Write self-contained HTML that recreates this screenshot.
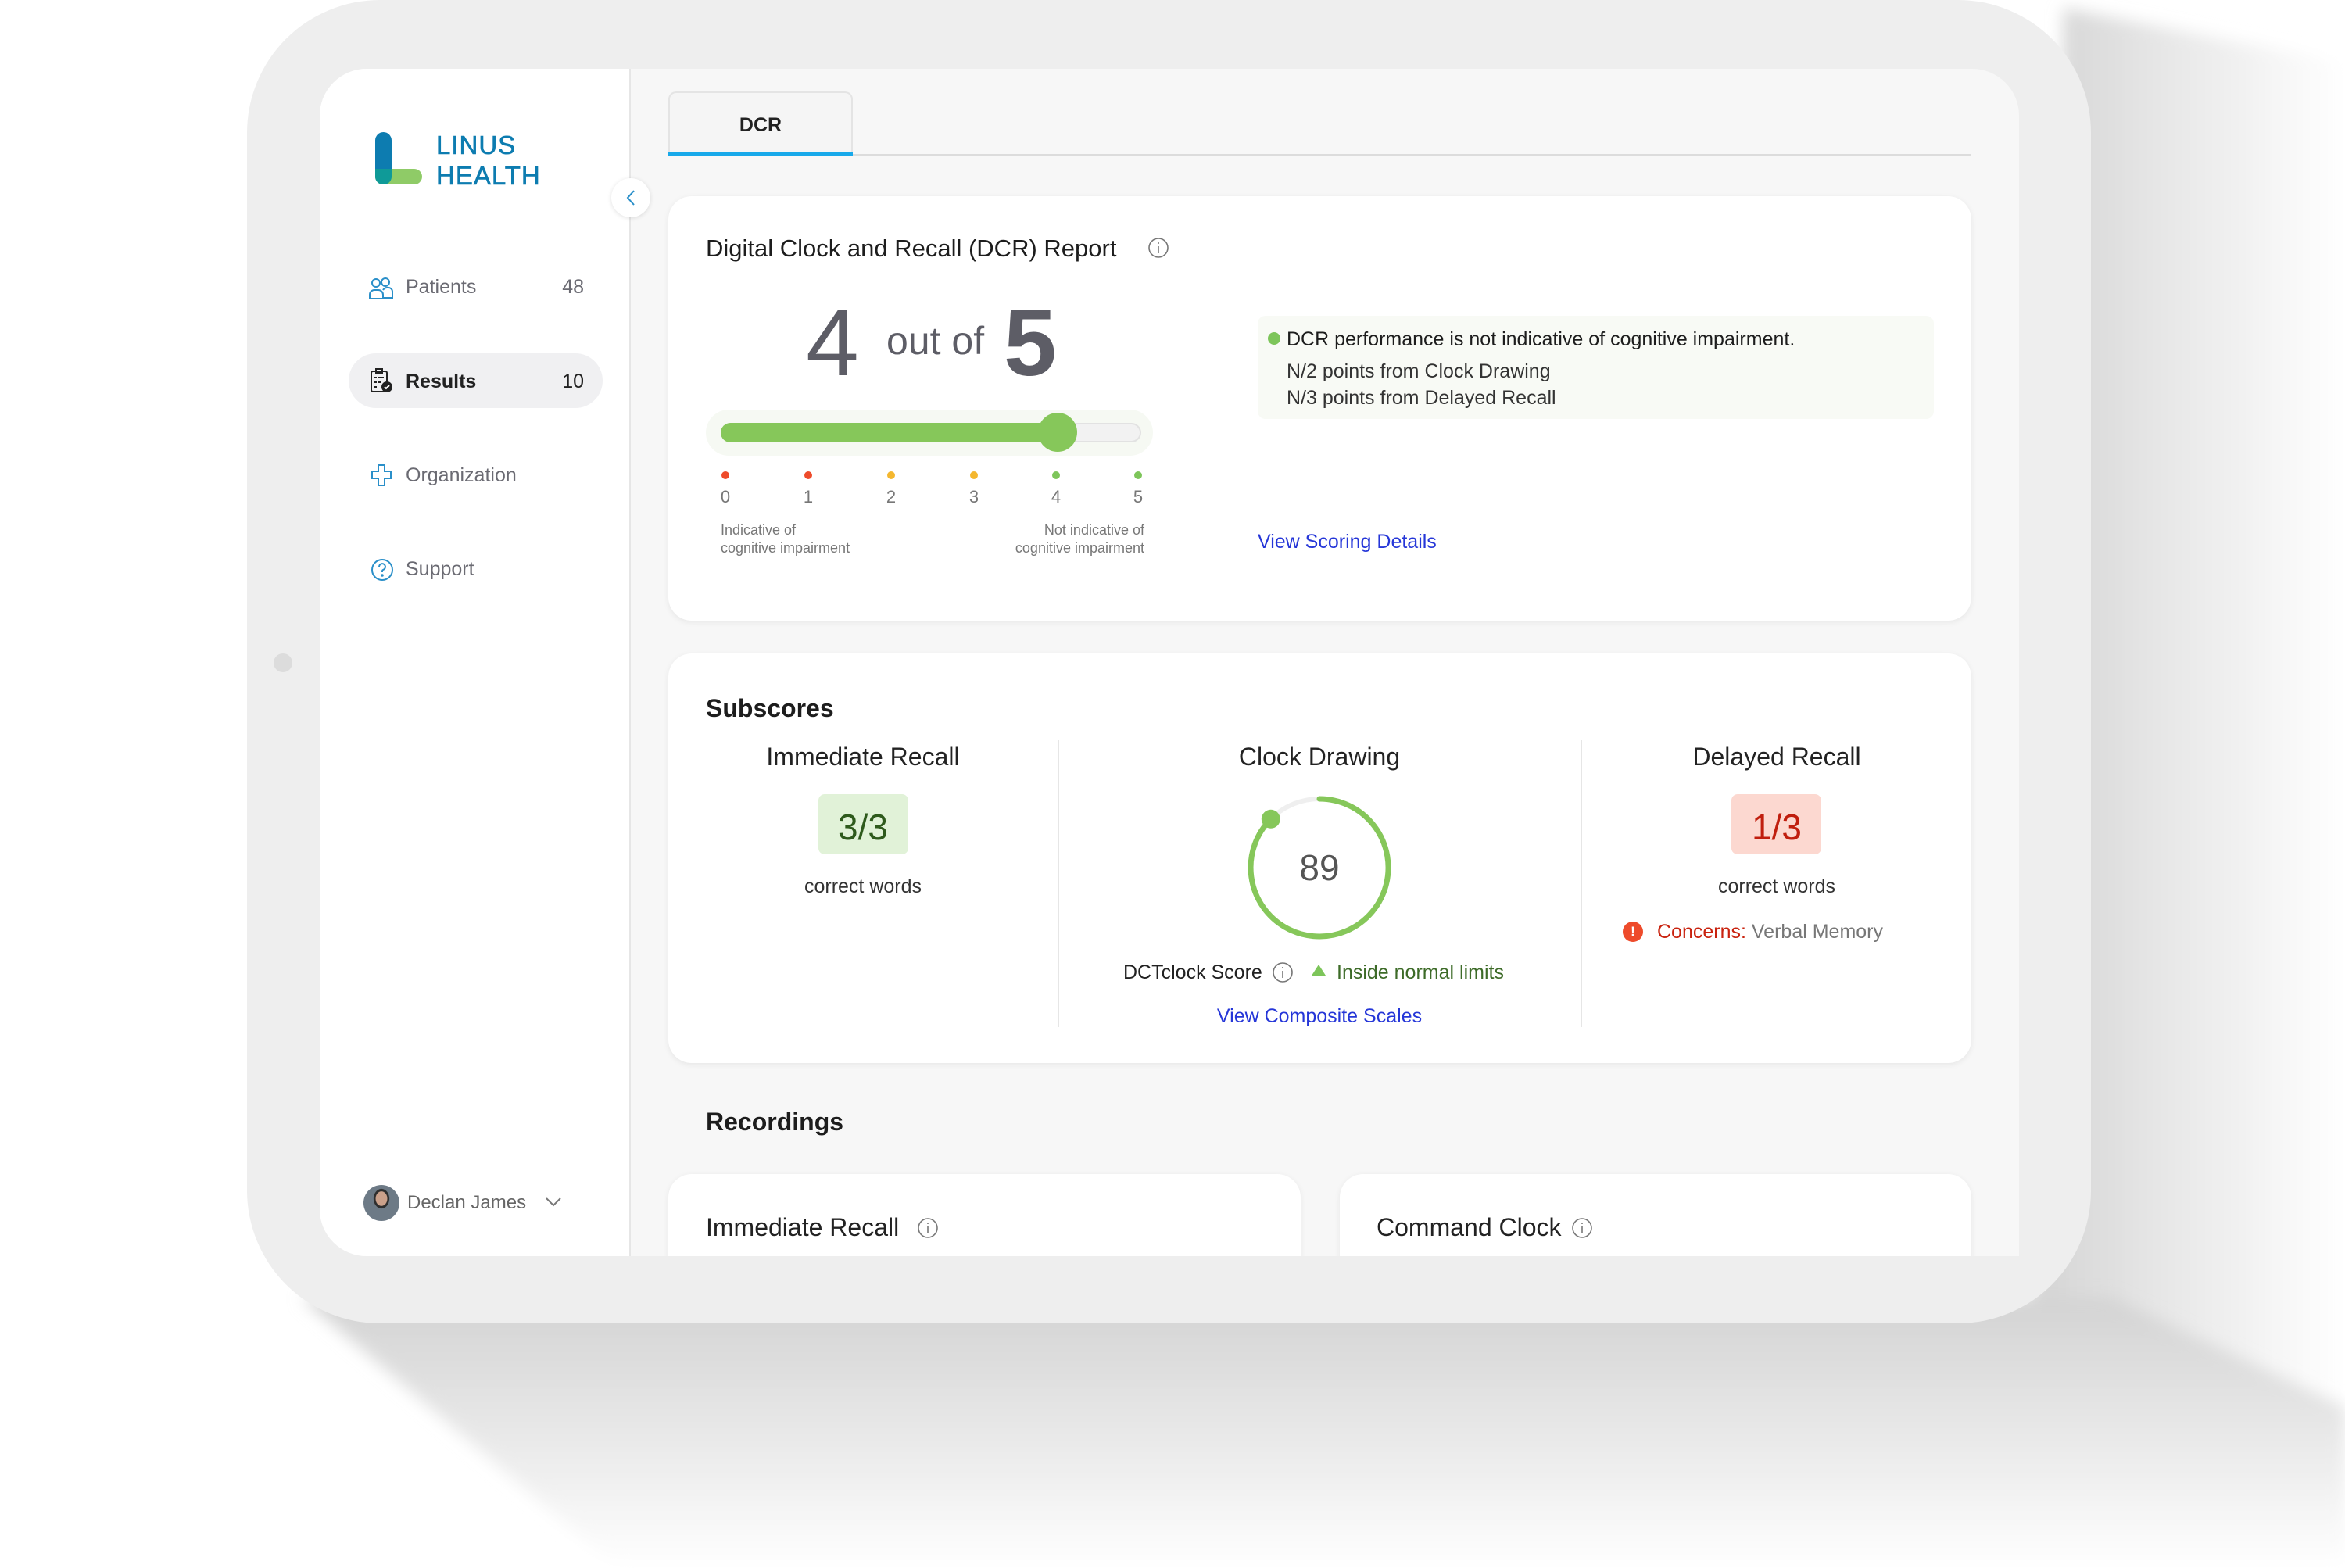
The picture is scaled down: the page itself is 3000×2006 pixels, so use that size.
<!DOCTYPE html>
<html><head><meta charset="utf-8">
<style>
*{margin:0;padding:0;box-sizing:border-box}
body{width:3000px;height:2006px;background:#fff;position:relative;overflow:hidden;font-family:"Liberation Sans",sans-serif;color:#222}
.a{position:absolute}
.frame{left:316px;top:0;width:2359px;height:1693px;background:#eeeeee;border-radius:170px}
.screen{left:409px;top:88px;width:2174px;height:1519px;background:#f7f7f7;border-radius:60px 60px 0 60px;overflow:hidden}
.side{left:0;top:0;width:398px;height:1519px;background:#fff;border-right:2px solid #e6e6e6}
.nav{font-size:25px;color:#6b6b73}
.card{background:#fff;border-radius:30px;box-shadow:0 2px 8px rgba(0,0,0,0.07)}
.t{white-space:nowrap}
.c{transform:translateX(-50%);text-align:center}
</style></head><body>
<svg class="a" style="left:0;top:0" width="3000" height="2006">
<defs>
<linearGradient id="g1" x1="0" y1="0" x2="1" y2="0">
<stop offset="0" stop-color="#d4d4d4"/><stop offset="0.45" stop-color="#e8e8e8"/><stop offset="1" stop-color="#ffffff"/>
</linearGradient>
<linearGradient id="g2" x1="0" y1="0" x2="0" y2="1">
<stop offset="0" stop-color="#d3d3d3"/><stop offset="0.5" stop-color="#e8e8e8"/><stop offset="1" stop-color="#ffffff"/>
</linearGradient>
<filter id="b"><feGaussianBlur stdDeviation="10"/></filter>
</defs>
<polygon points="2640,10 3000,80 3000,2006 2600,1693" fill="url(#g1)" filter="url(#b)"/>
<polygon points="385,1660 2700,1660 3000,1800 3000,2006 790,2006" fill="url(#g2)" filter="url(#b)"/>
</svg>
<div class="a frame"></div>
<div class="a" style="left:350px;top:836px;width:24px;height:24px;border-radius:50%;background:#dcdcdc"></div>
<div class="a screen">
 <div class="a side">
  <div class="a" style="left:71px;top:81px;width:21px;height:67px;border-radius:11px;background:#0d7cb0"></div>
  <div class="a" style="left:71px;top:128px;width:60px;height:20px;border-radius:10px;background:#86c75a;opacity:.92"></div>
  <div class="a" style="left:71px;top:128px;width:21px;height:20px;border-radius:0 0 10px 10px;background:#0f9a98"></div>
  <div class="a t" style="left:149px;top:78px;font-size:33px;line-height:39px;color:#0d7cb0;letter-spacing:1px;-webkit-text-stroke:0.6px #0d7cb0">LINUS<br>HEALTH</div>
  <svg class="a" style="left:62px;top:266px" width="32" height="30" viewBox="0 0 32 30" fill="none" stroke="#2a8fc9" stroke-width="2"><circle cx="10" cy="8" r="5"/><circle cx="22" cy="7" r="5"/><path d="M2 28v-5a6 6 0 0 1 6-6h5a6 6 0 0 1 6 6v5z"/><path d="M19 17a6 6 0 0 1 5-3h2a5 5 0 0 1 5 5v8H19"/></svg>
  <div class="a t nav" style="left:110px;top:265px">Patients</div>
  <div class="a t nav" style="left:302px;top:265px;width:36px;text-align:right">48</div>
  <div class="a" style="left:37px;top:364px;width:325px;height:70px;border-radius:35px;background:#f0f0f2"></div>
  <svg class="a" style="left:64px;top:383px" width="30" height="32" viewBox="0 0 30 32" fill="none" stroke="#222" stroke-width="2"><rect x="2" y="4" width="20" height="26" rx="2"/><rect x="8" y="1" width="8" height="5"/><path d="M6 12h3M6 18h3M6 24h3M11 12h7M11 18h4"/><circle cx="22" cy="24" r="6" fill="#222"/><path d="M19 24l2 2 4-4" stroke="#fff"/></svg>
  <div class="a t" style="left:110px;top:386px;font-size:25px;color:#222;font-weight:bold">Results</div>
  <div class="a t" style="left:302px;top:386px;width:36px;text-align:right;font-size:25px;color:#222">10</div>
  <svg class="a" style="left:65px;top:505px" width="30" height="30" viewBox="0 0 30 30" fill="none" stroke="#2a8fc9" stroke-width="2"><path d="M10 2h8v8h8v9h-8v9h-8v-9H2v-9h8z"/></svg>
  <div class="a t nav" style="left:110px;top:506px">Organization</div>
  <svg class="a" style="left:65px;top:626px" width="30" height="30" viewBox="0 0 30 30" fill="none" stroke="#2a8fc9" stroke-width="2"><circle cx="15" cy="15" r="13"/><path d="M11 11a4 4 0 1 1 5 4c-1 .5-1 1-1 3"/><circle cx="15" cy="22" r=".8" fill="#2a8fc9"/></svg>
  <div class="a t nav" style="left:110px;top:626px">Support</div>
  <div class="a" style="left:56px;top:1428px;width:46px;height:46px;border-radius:50%;background:radial-gradient(ellipse at 50% 38%,#caa08a 0 22%,#2e2e2e 24% 30%,#6d7a86 32%)"></div>
  <div class="a t" style="left:112px;top:1437px;font-size:24px;color:#666">Declan James</div>
  <svg class="a" style="left:288px;top:1443px" width="22" height="14" viewBox="0 0 22 14" fill="none" stroke="#777" stroke-width="2"><path d="M2 2l9 9 9-9"/></svg>
 </div>
 <div class="a" style="left:373px;top:140px;width:50px;height:50px;border-radius:50%;background:#fff;box-shadow:0 1px 6px rgba(0,0,0,.12)"></div>
 <svg class="a" style="left:390px;top:154px" width="16" height="22" viewBox="0 0 16 22" fill="none" stroke="#2a8fc9" stroke-width="2"><path d="M12 2l-8 9 8 9"/></svg>
 <div class="a" style="left:446px;top:29px;width:236px;height:82px;background:#f5f5f5;border:2px solid #e4e4e4;border-bottom:none;border-radius:10px 10px 0 0"></div>
 <div class="a" style="left:446px;top:109px;width:1667px;height:2px;background:#dcdcdc"></div>
 <div class="a" style="left:446px;top:106px;width:236px;height:6px;background:#18a9ea"></div>
 <div class="a t c" style="left:564px;top:58px;font-size:25px;font-weight:bold">DCR</div>
 <div class="a card" style="left:446px;top:163px;width:1667px;height:543px"></div>
 <div class="a t" style="left:494px;top:212px;font-size:31px;color:#1d1d1d">Digital Clock and Recall (DCR) Report</div>
 <svg class="a" style="left:1058px;top:214px" width="30" height="30" viewBox="0 0 30 30" fill="none" stroke="#777" stroke-width="1.6"><circle cx="15" cy="15" r="12"/><path d="M15 13v9M15 8v2"/></svg>
 <div class="a t" style="left:622px;top:285px;font-size:122px;line-height:130px;color:#5d5d66">4</div>
 <div class="a t" style="left:725px;top:319px;font-size:50px;color:#5d5d66">out of</div>
 <div class="a t" style="left:875px;top:285px;font-size:122px;line-height:130px;color:#5d5d66;font-weight:bold">5</div>
 <div class="a" style="left:494px;top:436px;width:572px;height:59px;border-radius:30px;background:#f6f9f3"></div>
 <div class="a" style="left:513px;top:453px;width:538px;height:25px;border-radius:13px;background:#f2f2f2;border:2px solid #e2e2e2"></div>
 <div class="a" style="left:513px;top:453px;width:440px;height:25px;border-radius:13px;background:#86c75a"></div>
 <div class="a" style="left:919px;top:440px;width:50px;height:50px;border-radius:50%;background:#86c75a"></div>
 <div class="a" style="left:514px;top:515px;width:10px;height:10px;border-radius:50%;background:#ee4b2b"></div>
 <div class="a" style="left:620px;top:515px;width:10px;height:10px;border-radius:50%;background:#ee4b2b"></div>
 <div class="a" style="left:726px;top:515px;width:10px;height:10px;border-radius:50%;background:#f4b72f"></div>
 <div class="a" style="left:832px;top:515px;width:10px;height:10px;border-radius:50%;background:#f4b72f"></div>
 <div class="a" style="left:937px;top:515px;width:10px;height:10px;border-radius:50%;background:#7dc55a"></div>
 <div class="a" style="left:1042px;top:515px;width:10px;height:10px;border-radius:50%;background:#7dc55a"></div>
 <div class="a t c" style="left:519px;top:535px;font-size:22px;color:#777">0</div>
 <div class="a t c" style="left:625px;top:535px;font-size:22px;color:#777">1</div>
 <div class="a t c" style="left:731px;top:535px;font-size:22px;color:#777">2</div>
 <div class="a t c" style="left:837px;top:535px;font-size:22px;color:#777">3</div>
 <div class="a t c" style="left:942px;top:535px;font-size:22px;color:#777">4</div>
 <div class="a t c" style="left:1047px;top:535px;font-size:22px;color:#777">5</div>
 <div class="a t" style="left:513px;top:579px;font-size:18px;line-height:23px;color:#777">Indicative of<br>cognitive impairment</div>
 <div class="a t" style="left:855px;top:579px;width:200px;text-align:right;font-size:18px;line-height:23px;color:#777">Not indicative of<br>cognitive impairment</div>
 <div class="a" style="left:1200px;top:316px;width:865px;height:132px;border-radius:10px;background:#f8faf5"></div>
 <div class="a" style="left:1213px;top:337px;width:16px;height:16px;border-radius:50%;background:#7dc55a"></div>
 <div class="a t" style="left:1237px;top:332px;font-size:25px;color:#1d1d1d">DCR performance is not indicative of cognitive impairment.</div>
 <div class="a t" style="left:1237px;top:373px;font-size:25px;color:#333">N/2 points from Clock Drawing</div>
 <div class="a t" style="left:1237px;top:407px;font-size:25px;color:#333">N/3 points from Delayed Recall</div>
 <div class="a t" style="left:1200px;top:591px;font-size:25px;color:#2536d8">View Scoring Details</div>
 <div class="a card" style="left:446px;top:748px;width:1667px;height:524px"></div>
 <div class="a t" style="left:494px;top:800px;font-size:32px;color:#1d1d1d;font-weight:bold">Subscores</div>
 <div class="a" style="left:944px;top:859px;width:2px;height:367px;background:#e6e6e6"></div>
 <div class="a" style="left:1613px;top:859px;width:2px;height:367px;background:#e6e6e6"></div>
 <div class="a t c" style="left:695px;top:862px;font-size:32px;color:#222">Immediate Recall</div>
 <div class="a" style="left:638px;top:928px;width:115px;height:77px;border-radius:8px;background:#e1f2d8"></div>
 <div class="a t c" style="left:695px;top:943px;font-size:46px;color:#2e5a1c">3/3</div>
 <div class="a t c" style="left:695px;top:1032px;font-size:25px;color:#333">correct words</div>
 <div class="a t c" style="left:1279px;top:862px;font-size:32px;color:#222">Clock Drawing</div>
 <svg class="a" style="left:1179px;top:922px" width="200" height="200" viewBox="0 0 200 200">
  <circle cx="100" cy="100" r="88" fill="none" stroke="#efefef" stroke-width="6"/>
  <path d="M100 12 A88 88 0 1 1 37.8 37.8" fill="none" stroke="#86c75a" stroke-width="7" stroke-linecap="round"/>
  <circle cx="37.8" cy="37.8" r="12" fill="#86c75a"/>
 </svg>
 <div class="a t c" style="left:1279px;top:995px;font-size:46px;color:#555">89</div>
 <div class="a t" style="left:1028px;top:1142px;font-size:25px;color:#222">DCTclock Score</div>
 <svg class="a" style="left:1217px;top:1141px" width="30" height="30" viewBox="0 0 30 30" fill="none" stroke="#777" stroke-width="1.6"><circle cx="15" cy="15" r="12"/><path d="M15 13v9M15 8v2"/></svg>
 <svg class="a" style="left:1267px;top:1144px" width="22" height="18" viewBox="0 0 22 18"><path d="M11 2l9 14H2z" fill="#7dc55a"/></svg>
 <div class="a t" style="left:1301px;top:1142px;font-size:25px;color:#3d6b28">Inside normal limits</div>
 <div class="a t c" style="left:1279px;top:1198px;font-size:25px;color:#2536d8">View Composite Scales</div>
 <div class="a t c" style="left:1864px;top:862px;font-size:32px;color:#222">Delayed Recall</div>
 <div class="a" style="left:1806px;top:928px;width:115px;height:77px;border-radius:8px;background:#fcd8d0"></div>
 <div class="a t c" style="left:1864px;top:943px;font-size:46px;color:#c01e0e">1/3</div>
 <div class="a t c" style="left:1864px;top:1032px;font-size:25px;color:#333">correct words</div>
 <div class="a" style="left:1667px;top:1091px;width:26px;height:26px;border-radius:50%;background:#ee4b2b;color:#fff;font-size:17px;font-weight:bold;text-align:center;line-height:26px">!</div>
 <div class="a t" style="left:1711px;top:1090px;font-size:25px;color:#c9230f">Concerns: <span style="color:#777">Verbal Memory</span></div>
 <div class="a t" style="left:494px;top:1329px;font-size:32px;color:#1d1d1d;font-weight:bold">Recordings</div>
 <div class="a card" style="left:446px;top:1414px;width:809px;height:200px"></div>
 <div class="a card" style="left:1305px;top:1414px;width:808px;height:200px"></div>
 <div class="a t" style="left:494px;top:1464px;font-size:32px;color:#222">Immediate Recall</div>
 <svg class="a" style="left:763px;top:1468px" width="30" height="30" viewBox="0 0 30 30" fill="none" stroke="#777" stroke-width="1.6"><circle cx="15" cy="15" r="12"/><path d="M15 13v9M15 8v2"/></svg>
 <div class="a t" style="left:1352px;top:1464px;font-size:32px;color:#222">Command Clock</div>
 <svg class="a" style="left:1600px;top:1468px" width="30" height="30" viewBox="0 0 30 30" fill="none" stroke="#777" stroke-width="1.6"><circle cx="15" cy="15" r="12"/><path d="M15 13v9M15 8v2"/></svg>
</div>
</body></html>
